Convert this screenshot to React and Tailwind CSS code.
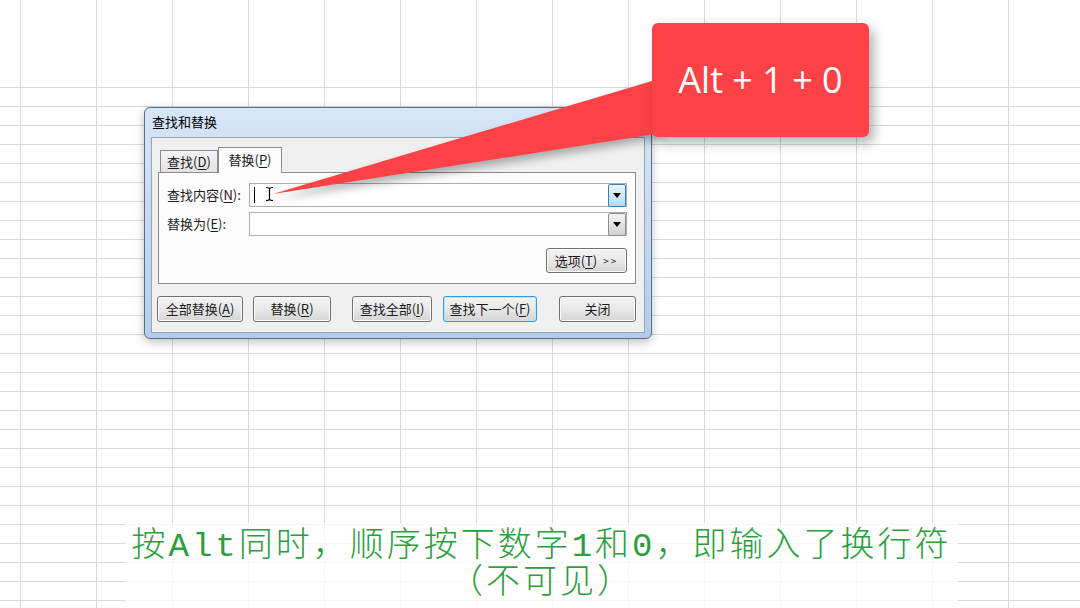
import React from 'react';

const UI_FONT = { fontFamily: '"Noto Sans CJK SC", "Noto Sans", sans-serif' };
const CAPTION_FONT = { fontFamily: '"Liberation Mono", "Noto Sans CJK SC", monospace' };
const CALLOUT_FONT = { fontFamily: '"Open Sans", "Liberation Sans", sans-serif' };

const ROWS = Array.from({ length: 28 });
const COLS = Array.from({ length: 14 });

// spreadsheet background
const SheetRow = ({ tall }) => (
  <div className={`flex shrink-0 ${tall ? 'h-[88px]' : 'h-[19px]'}`}>
    <div className="w-[21px] shrink-0 border-r border-b border-[#d9d9d9]" />
    {COLS.map((_, i) => (
      <div key={i} className="w-[76px] shrink-0 border-r border-b border-[#d9d9d9]" />
    ))}
  </div>
);

const Key = ({ children }) => <span className="underline underline-offset-[2px]">{children}</span>;

const DropBtn = ({ hot }) => (
  <div
    className={`ml-auto w-[18px] h-[23px] flex items-center justify-center border rounded-[2px] ${
      hot
        ? 'border-[#3c7fb1] bg-gradient-to-b from-[#eaf6fd] to-[#b2dcf4]'
        : 'border-[#8e8f8f] bg-gradient-to-b from-[#f4f4f4] to-[#d2d2d2]'
    }`}
  >
    <svg width="8" height="5" viewBox="0 0 8 5">
      <path d="M0 0h8L4 5z" fill="#000" />
    </svg>
  </div>
);

const Btn = ({ children, w, focus }) => (
  <div
    className={`${w} h-[26px] shrink-0 rounded-[3px] border flex items-center justify-center text-[13px] text-[#1b1b1b] bg-gradient-to-b from-[#f3f3f3] via-[#e9e9e9] to-[#d4d4d4] ${
      focus
        ? 'border-[#3399dd] shadow-[inset_0_0_0_1px_#bfe6f8]'
        : 'border-[#707070] shadow-[inset_0_0_0_1px_#fbfbfb]'
    }`}
  >
    {children}
  </div>
);

const IBeam = () => (
  <svg width="9" height="16" viewBox="0 0 9 16" className="ml-[10px] mt-[-2px]">
    <path
      d="M1 1.5Q4.5 1.5 4.5 3Q4.5 1.5 8 1.5M4.5 3V13M1 14.5Q4.5 14.5 4.5 13Q4.5 14.5 8 14.5"
      stroke="#fff"
      strokeWidth="3"
      fill="none"
    />
    <path
      d="M1 1.5Q4.5 1.5 4.5 3Q4.5 1.5 8 1.5M4.5 3V13M1 14.5Q4.5 14.5 4.5 13Q4.5 14.5 8 14.5"
      stroke="#000"
      strokeWidth="1.2"
      fill="none"
    />
  </svg>
);

const FindReplaceDialog = () => (
  <div
    className="absolute left-[144px] top-[107px] w-[508px] h-[232px] rounded-[6px] border border-[#5f6d7c] bg-gradient-to-b from-[#d7e6f7] via-[#c4daf2] to-[#b2cdec] shadow-[0_3px_10px_rgba(0,0,0,0.25)] px-[6px]"
    style={UI_FONT}
  >
    {/* title bar */}
    <div className="h-[29px] flex items-center pl-[1px] pb-[2px] text-[13px] text-black">查找和替换</div>

    {/* client area */}
    <div className="h-[196px] border border-[#97a3b1] bg-[#f0f0f0] pl-[6px] pr-[8px] pt-[9px]">
      {/* tabs */}
      <div className="h-[25px] flex items-end pl-[2px]">
        <div className="w-[58px] h-[22px] border border-b-0 border-[#898c95] bg-gradient-to-b from-[#f4f4f4] to-[#e2e2e2] flex items-center justify-center text-[13px] text-[#1b1b1b]">
          查找(<Key>D</Key>)
        </div>
        <div className="relative z-10 w-[64px] h-[26px] -mb-[1px] border border-b-0 border-[#898c95] bg-[#fcfcfc] flex items-start justify-center pt-[2px] text-[13px] text-[#1b1b1b]">
          替换(<Key>P</Key>)
        </div>
      </div>

      {/* tab page */}
      <div className="h-[112px] border border-[#898c95] bg-[#fcfcfc] px-[8px] pt-[10px] text-[13px] text-[#1b1b1b]">
        <div className="flex items-center h-[24px]">
          <div className="w-[82px] shrink-0">
            查找内容(<Key>N</Key>):
          </div>
          <div className="w-[378px] h-[24px] border border-[#abadb3] bg-white flex items-center pl-[4px]">
            <div className="w-[1px] h-[16px] bg-black" />
            <IBeam />
            <DropBtn hot />
          </div>
        </div>
        <div className="flex items-center h-[24px] mt-[5px]">
          <div className="w-[82px] shrink-0">
            替换为(<Key>E</Key>):
          </div>
          <div className="w-[378px] h-[24px] border border-[#abadb3] bg-white flex items-center">
            <DropBtn />
          </div>
        </div>
        <div className="flex justify-end mt-[12px]">
          <div className="w-[81px] h-[25px] rounded-[3px] border border-[#707070] bg-gradient-to-b from-[#f3f3f3] via-[#e9e9e9] to-[#d4d4d4] shadow-[inset_0_0_0_1px_#fbfbfb] flex items-center justify-center gap-[6px]">
            <span>
              选项(<Key>T</Key>)
            </span>
            <span className="text-[10px] tracking-[2px]">&gt;&gt;</span>
          </div>
        </div>
      </div>

      {/* button row */}
      <div className="flex mt-[12px]">
        <div className="ml-[-1px]">
          <Btn w="w-[86px]">
            全部替换(<Key>A</Key>)
          </Btn>
        </div>
        <div className="ml-[10px]">
          <Btn w="w-[78px]">
            替换(<Key>R</Key>)
          </Btn>
        </div>
        <div className="ml-[21px]">
          <Btn w="w-[80px]">
            查找全部(<Key>I</Key>)
          </Btn>
        </div>
        <div className="ml-[11px]">
          <Btn w="w-[94px]" focus>
            查找下一个(<Key>F</Key>)
          </Btn>
        </div>
        <div className="ml-[22px]">
          <Btn w="w-[77px]">关闭</Btn>
        </div>
      </div>
    </div>
  </div>
);

export default function App() {
  return (
    <div className="relative w-[1080px] h-[608px] overflow-hidden bg-white">
      <div className="flex flex-col">
        <SheetRow tall />
        {ROWS.map((_, i) => (
          <SheetRow key={i} />
        ))}
      </div>

      <FindReplaceDialog />

      {/* callout pointer */}
      <svg
        className="absolute left-0 top-0 pointer-events-none drop-shadow-[3px_5px_4px_rgba(0,0,0,0.3)]"
        width="1080"
        height="608"
        viewBox="0 0 1080 608"
      >
        <polygon points="273,194 662,78 662,133" fill="#fc4246" />
      </svg>

      {/* callout */}
      <div
        className="absolute left-[652px] top-[23px] w-[217px] h-[114px] rounded-[6px] bg-[#fc4246] shadow-[5px_6px_12px_rgba(0,0,0,0.3)] flex items-center justify-center text-white text-[36px] font-medium leading-none"
        style={CALLOUT_FONT}
      >
        Alt + 1 + 0
      </div>

      {/* caption */}
      <div
        className="absolute left-[125px] top-[523px] w-[833px] h-[85px] bg-white/80 pt-[6px] flex flex-col items-center text-[34px] leading-[37px] tracking-[3px] font-light text-[#2a9f3c]"
        style={CAPTION_FONT}
      >
        <div className="whitespace-nowrap">按Alt同时，顺序按下数字1和0，即输入了换行符</div>
        <div className="whitespace-nowrap">（不可见）</div>
      </div>
    </div>
  );
}
